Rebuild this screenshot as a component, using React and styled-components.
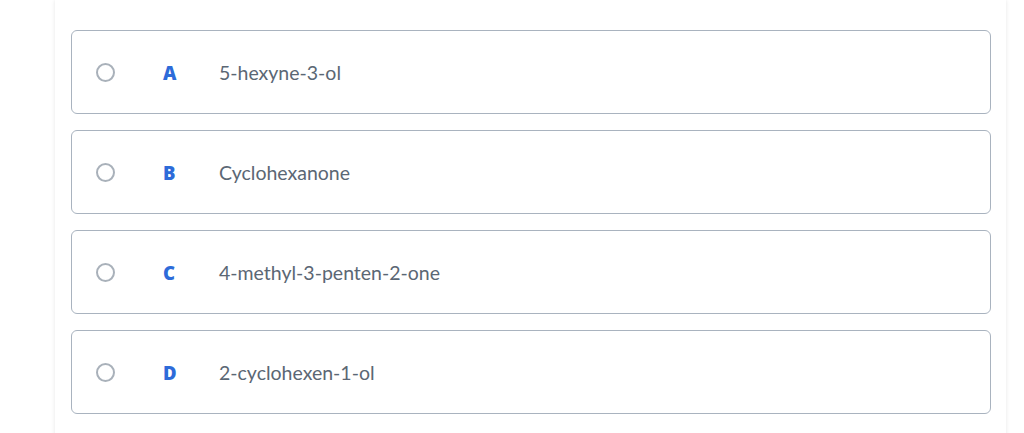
import React from "react";
import styled, { createGlobalStyle } from "styled-components";

const Global = createGlobalStyle`
  html, body {
    margin: 0;
    padding: 0;
    background: #ffffff;
    font-family: "Lato", "Open Sans", sans-serif;
  }
`;

const Page = styled.div`
  height: 433px;
  overflow: hidden;
  padding-left: 55px;
  padding-right: 18px;
`;

const Panel = styled.div`
  background: #ffffff;
  min-height: 460px;
  box-shadow: 0 0 4px rgba(0, 0, 0, 0.1);
  padding: 30px 15px 0 16px;
`;

const List = styled.div`
  display: flex;
  flex-direction: column;
  gap: 16px;
`;

const Option = styled.label`
  display: flex;
  align-items: center;
  height: 84px;
  box-sizing: border-box;
  border: 1.5px solid #a9b3bf;
  border-radius: 6px;
  padding-left: 24px;
  cursor: pointer;
`;

const Radio = styled.span`
  width: 19px;
  height: 19px;
  box-sizing: border-box;
  border: 2px solid #a9b1ba;
  border-radius: 50%;
  flex-shrink: 0;
`;

const Letter = styled.span`
  width: 56px;
  margin-left: 48px;
  font-family: "Open Sans", sans-serif;
  font-weight: 800;
  font-size: 18.5px;
  color: #2d6bd9;
`;

const Label = styled.span`
  font-size: 19.5px;
  color: #5b6774;
`;

const options = [
  ["A", "5-hexyne-3-ol"],
  ["B", "Cyclohexanone"],
  ["C", "4-methyl-3-penten-2-one"],
  ["D", "2-cyclohexen-1-ol"],
];

export default function App() {
  return (
    <>
      <Global />
      <Page>
        <Panel>
          <List>
            {options.map(([letter, text]) => (
              <Option key={letter}>
                <Radio />
                <Letter>{letter}</Letter>
                <Label>{text}</Label>
              </Option>
            ))}
          </List>
        </Panel>
      </Page>
    </>
  );
}
